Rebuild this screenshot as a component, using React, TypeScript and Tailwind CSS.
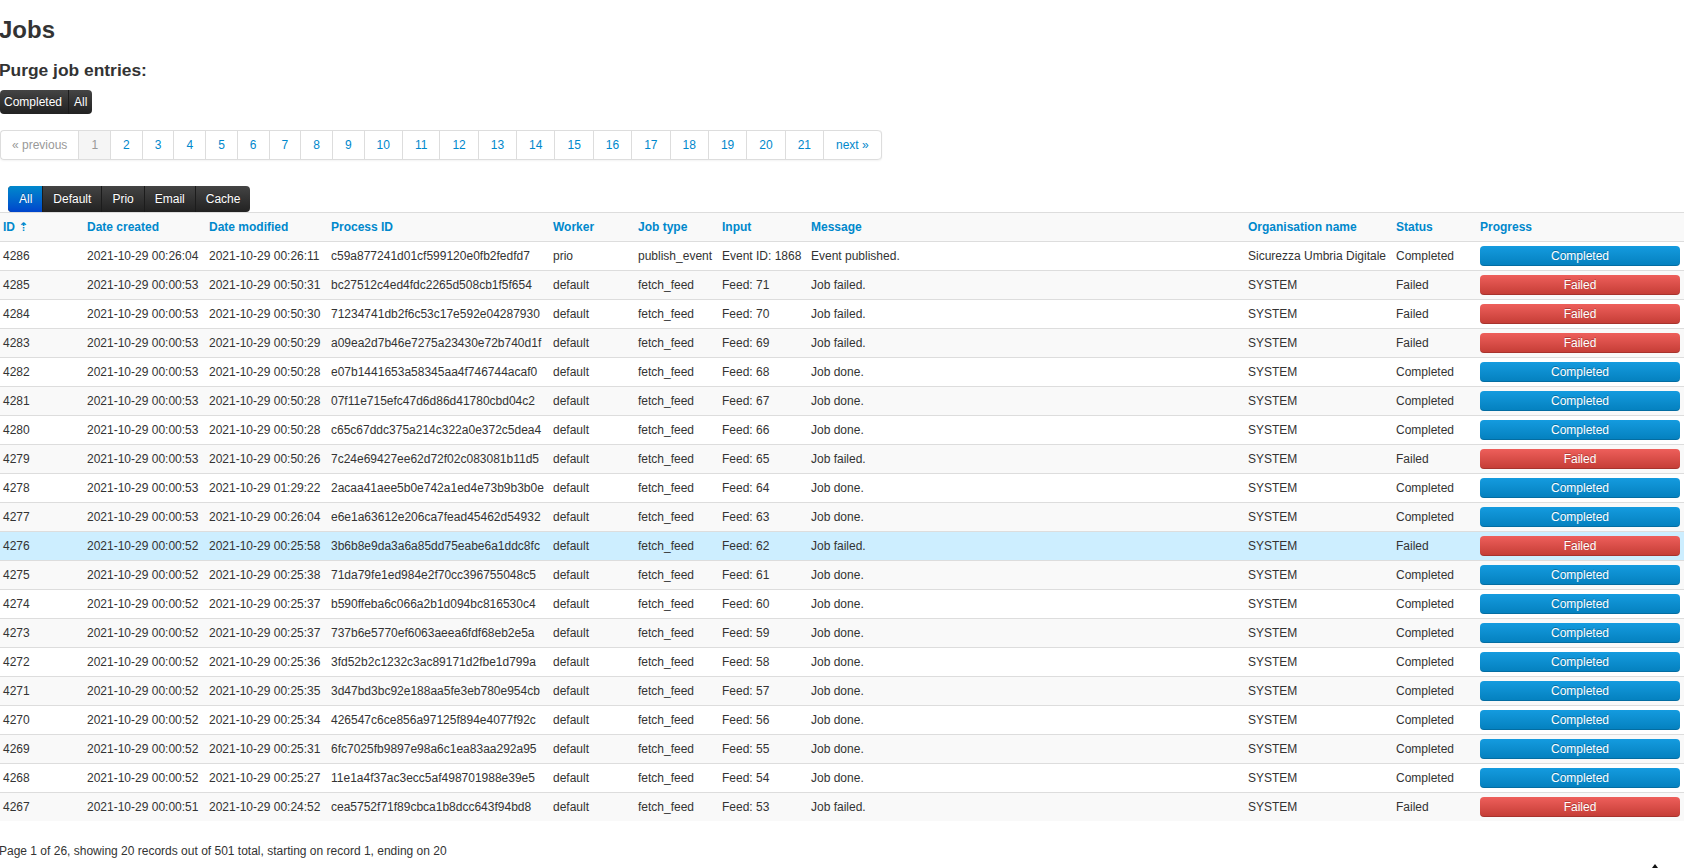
const pages = ["2", "3", "4", "5", "6", "7", "8", "9", "10", "11", "12", "13", "14", "15", "16", "17", "18", "19", "20", "21"]

const queues = ["Default", "Prio", "Email", "Cache"]

const columns = [
  { title: "Date created", width: "w-[122px]" },
  { title: "Date modified", width: "w-[122px]" },
  { title: "Process ID", width: "w-[222px]" },
  { title: "Worker", width: "w-[85px]" },
  { title: "Job type", width: "w-[84px]" },
  { title: "Input", width: "w-[89px]" },
  { title: "Message", width: "w-[437px]" },
  { title: "Organisation name", width: "w-[148px]" },
  { title: "Status", width: "w-[84px]" },
  { title: "Progress", width: "w-[209px]" },
]

// id, created, modified, process, input, failed
const rows: [number, string, string, string, number, boolean][] = [
  [4285, "00:00:53", "00:50:31", "bc27512c4ed4fdc2265d508cb1f5f654", 71, true],
  [4284, "00:00:53", "00:50:30", "71234741db2f6c53c17e592e04287930", 70, true],
  [4283, "00:00:53", "00:50:29", "a09ea2d7b46e7275a23430e72b740d1f", 69, true],
  [4282, "00:00:53", "00:50:28", "e07b1441653a58345aa4f746744acaf0", 68, false],
  [4281, "00:00:53", "00:50:28", "07f11e715efc47d6d86d41780cbd04c2", 67, false],
  [4280, "00:00:53", "00:50:28", "c65c67ddc375a214c322a0e372c5dea4", 66, false],
  [4279, "00:00:53", "00:50:26", "7c24e69427ee62d72f02c083081b11d5", 65, true],
  [4278, "00:00:53", "01:29:22", "2acaa41aee5b0e742a1ed4e73b9b3b0e", 64, false],
  [4277, "00:00:53", "00:26:04", "e6e1a63612e206ca7fead45462d54932", 63, false],
  [4276, "00:00:52", "00:25:58", "3b6b8e9da3a6a85dd75eabe6a1ddc8fc", 62, true],
  [4275, "00:00:52", "00:25:38", "71da79fe1ed984e2f70cc396755048c5", 61, false],
  [4274, "00:00:52", "00:25:37", "b590ffeba6c066a2b1d094bc816530c4", 60, false],
  [4273, "00:00:52", "00:25:37", "737b6e5770ef6063aeea6fdf68eb2e5a", 59, false],
  [4272, "00:00:52", "00:25:36", "3fd52b2c1232c3ac89171d2fbe1d799a", 58, false],
  [4271, "00:00:52", "00:25:35", "3d47bd3bc92e188aa5fe3eb780e954cb", 57, false],
  [4270, "00:00:52", "00:25:34", "426547c6ce856a97125f894e4077f92c", 56, false],
  [4269, "00:00:52", "00:25:31", "6fc7025fb9897e98a6c1ea83aa292a95", 55, false],
  [4268, "00:00:52", "00:25:27", "11e1a4f37ac3ecc5af498701988e39e5", 54, false],
  [4267, "00:00:51", "00:24:52", "cea5752f71f89cbca1b8dcc643f94bd8", 53, true],
]

const jobs = [
  {
    id: 4286,
    created: "2021-10-29 00:26:04",
    modified: "2021-10-29 00:26:11",
    process: "c59a877241d01cf599120e0fb2fedfd7",
    worker: "prio",
    type: "publish_event",
    input: "Event ID: 1868",
    message: "Event published.",
    org: "Sicurezza Umbria Digitale",
    failed: false,
  },
  ...rows.map(([id, created, modified, process, feed, failed]) => ({
    id,
    created: `2021-10-29 ${created}`,
    modified: `2021-10-29 ${modified}`,
    process,
    worker: "default",
    type: "fetch_feed",
    input: `Feed: ${feed}`,
    message: failed ? "Job failed." : "Job done.",
    org: "SYSTEM",
    failed,
  })),
]

function ProgressBar({ failed }: { failed: boolean }) {
  return (
    <div
      className={`h-5 w-[200px] rounded-[4px] text-center leading-5 text-white [text-shadow:0_-1px_0_rgba(0,0,0,0.25)] shadow-[inset_0_-1px_0_rgba(0,0,0,0.15)] bg-gradient-to-b ${
        failed ? "from-[#ee5f5b] to-[#c43c35]" : "from-[#149bdf] to-[#0480be]"
      }`}
    >
      {failed ? "Failed" : "Completed"}
    </div>
  )
}

export default function App() {
  return (
    <div className="relative h-[868px] overflow-hidden bg-white font-['Liberation_Sans',Arial,sans-serif] text-[12px] leading-5 text-[#333]">
      <h2 className="mt-2.5 mb-2.5 -ml-px text-[24px] leading-10 font-bold">Jobs</h2>
      <h4 className="mb-2.5 -ml-px text-[17.4px] leading-5 font-bold">Purge job entries:</h4>

      <div className="flex w-max overflow-hidden rounded-[4px] bg-gradient-to-b from-[#444] to-[#222] text-white [text-shadow:0_-1px_0_rgba(0,0,0,0.25)]">
        <a className="py-0.5 pr-[6px] pl-[4px]">Completed</a>
        <a className="border-l border-[#1c1c1c] px-[5px] py-0.5">All</a>
      </div>

      {/* Pagination */}
      <div className="mt-4 flex h-[30px] w-max rounded-[4px] border-r border-[#ddd] leading-[28px] shadow-[0_1px_2px_rgba(0,0,0,0.05)]">
        <span className="rounded-l-[4px] border-y border-l border-[#ddd] px-[11px] text-[#999]">« previous</span>
        <span className="border-y border-l border-[#ddd] bg-[#f5f5f5] px-3 text-[#999]">1</span>
        {pages.map((page) => (
          <a key={page} className="border-y border-l border-[#ddd] px-3 text-[#0088cc]">
            {page}
          </a>
        ))}
        <a className="rounded-r-[4px] border-y border-l border-[#ddd] px-3 text-[#0088cc]">next »</a>
      </div>

      {/* Queue filter */}
      <div className="mt-[26px] ml-2 flex w-max overflow-hidden rounded-[4px] bg-gradient-to-b from-[#444] to-[#222] text-white [text-shadow:0_-1px_0_rgba(0,0,0,0.25)]">
        <a className="bg-gradient-to-b from-[#0088cc] to-[#0044cc] py-[3px] pr-[10px] pl-[11px]">All</a>
        {queues.map((queue) => (
          <a key={queue} className="border-l border-[#1c1c1c] px-[10px] py-[3px]">
            {queue}
          </a>
        ))}
      </div>

      <table className="w-full table-fixed border-separate border-spacing-0 whitespace-nowrap">
        <colgroup>
          <col className="w-[82px]" />
          {columns.map((column) => (
            <col key={column.title} className={column.width} />
          ))}
        </colgroup>
        <thead>
          <tr className="bg-[#f9f9f9]">
            <th className="border-t border-[#ddd] py-1 pr-[5px] pl-[3px] text-left font-bold text-[#0088cc]">
              ID <span className="font-['DejaVu_Sans',sans-serif] font-bold">⇡</span>
            </th>
            {columns.map((column) => (
              <th key={column.title} className="border-t border-[#ddd] px-[5px] py-1 text-left font-bold text-[#0088cc]">
                {column.title}
              </th>
            ))}
          </tr>
        </thead>
        <tbody>
          {jobs.map((job, index) => (
            <tr
              key={job.id}
              className={job.id === 4276 ? "bg-[#cdeeff]" : index % 2 === 1 ? "bg-[#f9f9f9]" : "bg-white"}
            >
              <td className="border-t border-[#ddd] py-1 pr-[5px] pl-[3px]">{job.id}</td>
              <td className="border-t border-[#ddd] px-[5px] py-1">{job.created}</td>
              <td className="border-t border-[#ddd] px-[5px] py-1">{job.modified}</td>
              <td className="border-t border-[#ddd] px-[5px] py-1">{job.process}</td>
              <td className="border-t border-[#ddd] px-[5px] py-1">{job.worker}</td>
              <td className="border-t border-[#ddd] px-[5px] py-1">{job.type}</td>
              <td className="border-t border-[#ddd] px-[5px] py-1">{job.input}</td>
              <td className="border-t border-[#ddd] px-[5px] py-1">{job.message}</td>
              <td className="border-t border-[#ddd] px-[5px] py-1">{job.org}</td>
              <td className="border-t border-[#ddd] px-[5px] py-1">{job.failed ? "Failed" : "Completed"}</td>
              <td className="border-t border-[#ddd] px-[5px] py-1">
                <ProgressBar failed={job.failed} />
              </td>
            </tr>
          ))}
        </tbody>
      </table>

      <p className="mt-5 -ml-px">Page 1 of 26, showing 20 records out of 501 total, starting on record 1, ending on 20</p>

      {/* scroll-to-top arrow, cut off by the window edge */}
      <svg className="absolute top-[864px] left-[1652px]" width="6" height="4" viewBox="0 0 6 4">
        <path d="M3 0 L6 4 L0 4 Z" fill="#111" />
      </svg>
    </div>
  )
}
